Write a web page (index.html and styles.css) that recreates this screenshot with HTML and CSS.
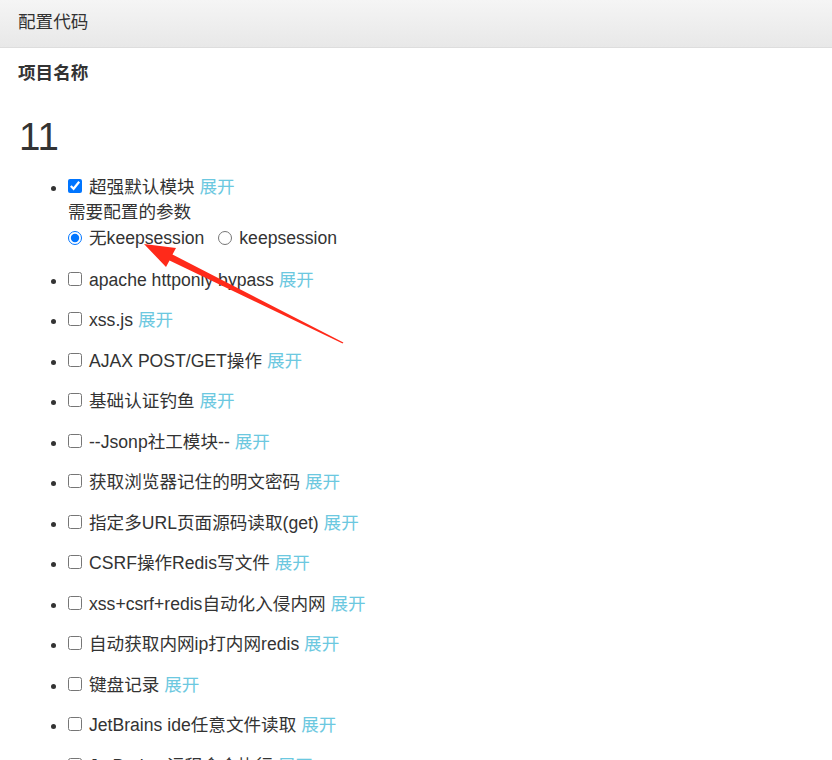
FILE: index.html
```html
<!DOCTYPE html>
<html lang="zh-CN">
<head>
<meta charset="utf-8">
<title>配置代码</title>
<link rel="stylesheet" href="styles.css">
</head>
<body>
<div class="panel">
  <div class="panel-heading">配置代码</div>
  <div class="panel-body">
    <div class="project-label">项目名称</div>
    <h1 class="project-name">11</h1>
    <ul class="module-list">
      <li>
        <div class="module-row"><input type="checkbox" class="chk" checked>超强默认模块 <a class="expand">展开</a></div>
        <div class="param-title">需要配置的参数</div>
        <div class="param-row">
          <label class="opt"><input type="radio" name="ks" class="rad" checked>无keepsession</label>
          <label class="opt"><input type="radio" name="ks" class="rad">keepsession</label>
        </div>
      </li>
      <li><div class="module-row"><input type="checkbox" class="chk">apache httponly bypass <a class="expand">展开</a></div></li>
      <li><div class="module-row"><input type="checkbox" class="chk">xss.js <a class="expand">展开</a></div></li>
      <li><div class="module-row"><input type="checkbox" class="chk">AJAX POST/GET操作 <a class="expand">展开</a></div></li>
      <li><div class="module-row"><input type="checkbox" class="chk">基础认证钓鱼 <a class="expand">展开</a></div></li>
      <li><div class="module-row"><input type="checkbox" class="chk">--Jsonp社工模块-- <a class="expand">展开</a></div></li>
      <li><div class="module-row"><input type="checkbox" class="chk">获取浏览器记住的明文密码 <a class="expand">展开</a></div></li>
      <li><div class="module-row"><input type="checkbox" class="chk">指定多URL页面源码读取(get) <a class="expand">展开</a></div></li>
      <li><div class="module-row"><input type="checkbox" class="chk">CSRF操作Redis写文件 <a class="expand">展开</a></div></li>
      <li><div class="module-row"><input type="checkbox" class="chk">xss+csrf+redis自动化入侵内网 <a class="expand">展开</a></div></li>
      <li><div class="module-row"><input type="checkbox" class="chk">自动获取内网ip打内网redis <a class="expand">展开</a></div></li>
      <li><div class="module-row"><input type="checkbox" class="chk">键盘记录 <a class="expand">展开</a></div></li>
      <li><div class="module-row"><input type="checkbox" class="chk">JetBrains ide任意文件读取 <a class="expand">展开</a></div></li>
      <li><div class="module-row"><input type="checkbox" class="chk">JetBrains 远程命令执行 <a class="expand">展开</a></div></li>
    </ul>
  </div>
</div>
<svg class="annotation" width="832" height="760" viewBox="0 0 832 760" xmlns="http://www.w3.org/2000/svg">
  <polygon fill="#ff2a1a" points="144,244 176,248 172.5,254.6 343.4,342.6 342.6,343.4 169.5,260.4 166,267"/>
</svg>
</body>
</html>
```

FILE: styles.css
```css
html, body {
  margin: 0;
  padding: 0;
  background: #fff;
}

body {
  font-family: "Liberation Sans", "Noto Sans CJK SC", sans-serif;
  font-size: 17.6px;
  color: #333;
  position: relative;
}

.panel-heading {
  height: 25px;
  padding: 10px 18px 12px;
  line-height: 25px;
  background: linear-gradient(to bottom, #f5f5f5 0%, #e8e8e8 100%);
  border-bottom: 1px solid #dddddd;
}

.panel-body {
  padding: 0 18px;
}

.project-label {
  margin-top: 12.5px;
  line-height: 25px;
  font-weight: bold;
}

.project-name {
  margin: 29.7px 0 0 1px;
  font-size: 38.5px;
  font-weight: normal;
  line-height: 43.6px;
}

.module-list {
  margin: 16.7px 0 0;
  padding-left: 50px;
}

.module-list li {
  line-height: 25px;
  margin-bottom: 15.5px;
}

.module-row,
.param-title {
  line-height: 25px;
}

.chk {
  width: 14px;
  height: 14px;
  margin: 0 7px 0 0;
  vertical-align: 0;
}

.rad {
  width: 14px;
  height: 14px;
  margin: 0 7px 0 0;
  vertical-align: -1px;
}

.param-row {
  line-height: 27px;
}

.opt {
  display: inline-block;
  margin-right: 9px;
}

.expand {
  color: #6cc8e0;
  text-decoration: none;
  cursor: pointer;
}

.annotation {
  position: absolute;
  top: 0;
  left: 0;
  pointer-events: none;
}
```
